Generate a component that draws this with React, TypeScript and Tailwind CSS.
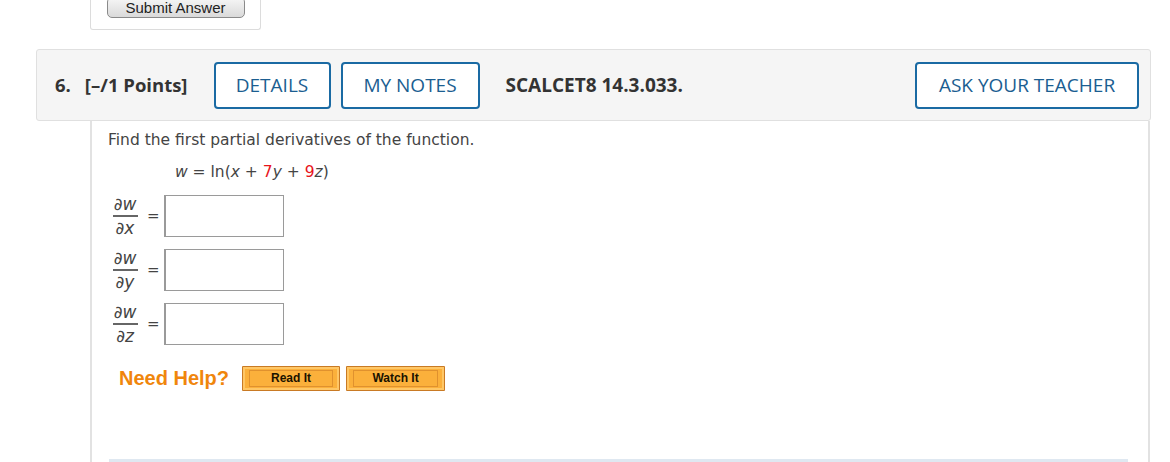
import React from "react"

const body = { fontFamily: '"DejaVu Sans", Verdana, sans-serif' }
const head = { fontFamily: '"Open Sans", sans-serif' }

function Frac({ v }: { v: string }) {
    return (
        <div className="flex items-center" style={body}>
            <div className="flex flex-col items-center w-[26px] text-[17px] leading-[18px] text-[#444]">
                <span><span>∂</span><i>w</i></span>
                <span className="block w-[25px] h-[2px] bg-[#666] my-[2px]"></span>
                <span><span>∂</span><i>{v}</i></span>
            </div>
            <span className="ml-[9px] mr-[4px] text-[15px] text-[#444]">=</span>
            <div className="w-[120px] h-[42px] border border-[#9a9a9a] border-l-2 bg-white"></div>
        </div>
    )
}

function OutlineBtn({ label, w }: { label: string; w: string }) {
    return (
        <button
            className={`${w} h-[47px] border-2 border-[#1a6aa3] rounded-[4px] bg-white text-[#1b5e91] text-[19px] font-medium`}
            style={head}
        >
            {label}
        </button>
    )
}

function HelpBtn({ label, w }: { label: string; w: string }) {
    return (
        <button className={`${w} h-[25px] p-[1px] bg-[#c97a24] rounded-[1px]`}>
            <div className="w-full h-full border-2 border-[#ffc766] bg-[#fbb03b] flex items-center justify-center">
                <span className="w-[calc(100%-8px)] h-[17px] border border-[#e0912e] flex items-center justify-center text-[12px] font-bold text-[#1a1200]" style={{ fontFamily: '"Liberation Sans", Arial, sans-serif' }}>
                    {label}
                </span>
            </div>
        </button>
    )
}

export default function App() {
    return (
        <div className="w-[1170px] h-[462px] bg-white overflow-hidden">
            <div className="ml-[90px] w-[171px] h-[30px] border-x border-b border-[#dcdcdc] rounded-b-[3px] flex justify-center">
                <button
                    className="-mt-[3px] w-[138px] h-[21px] rounded-[5px] border border-[#8a8a8a] bg-gradient-to-b from-[#f6f6f6] to-[#dadada] text-[15px] leading-[18px] text-[#222]"
                    style={{ fontFamily: '"Liberation Sans", Arial, sans-serif' }}
                >
                    Submit Answer
                </button>
            </div>

            <div className="mt-[19px] ml-[36px] w-[1115px] h-[72px] bg-[#f5f5f5] border border-[#e0e0e0] rounded-[3px] flex items-center pl-[18px] pr-[11px]" style={head}>
                <span className="font-bold text-[18.5px] text-[#333]">6.</span>
                <span className="ml-[14px] font-bold text-[18.5px] text-[#333]">[–/1 Points]</span>
                <div className="ml-[26px] flex gap-[10px]">
                    <OutlineBtn label="DETAILS" w="w-[117px]" />
                    <OutlineBtn label="MY NOTES" w="w-[139px]" />
                </div>
                <span className="ml-[26px] font-bold text-[19px] text-[#333]">SCALCET8 14.3.033.</span>
                <div className="ml-auto">
                    <OutlineBtn label="ASK YOUR TEACHER" w="w-[224px]" />
                </div>
            </div>

            <div className="ml-[90px] w-[1060px] h-[400px] border-x-2 border-[#e2e2e2] pl-[16px] pt-[9px]">
                <p className="text-[15.5px] text-[#444] leading-[20px]" style={body}>
                    Find the first partial derivatives of the function.
                </p>
                <p className="mt-[12px] ml-[67px] text-[15.5px] text-[#444] leading-[20px]" style={body}>
                    <i>w</i> = ln(<i>x</i> + <span className="text-[#e8141c]">7</span><i>y</i> + <span className="text-[#e8141c]">9</span><i>z</i>)
                </p>
                <div className="mt-[13px] ml-[4px] flex flex-col gap-[12px]">
                    <Frac v="x" />
                    <Frac v="y" />
                    <Frac v="z" />
                </div>
                <div className="mt-[18px] ml-[11px] flex items-center">
                    <span className="text-[20px] font-bold text-[#f0860c]" style={{ fontFamily: '"Liberation Sans", Arial, sans-serif' }}>
                        Need Help?
                    </span>
                    <div className="ml-[13px] flex gap-[6px]">
                        <HelpBtn label="Read It" w="w-[98px]" />
                        <HelpBtn label="Watch It" w="w-[99px]" />
                    </div>
                </div>
                <div className="mt-[66px] ml-[1px] w-[1019px] h-[4px] bg-[#dfe8f1]"></div>
            </div>
        </div>
    )
}
